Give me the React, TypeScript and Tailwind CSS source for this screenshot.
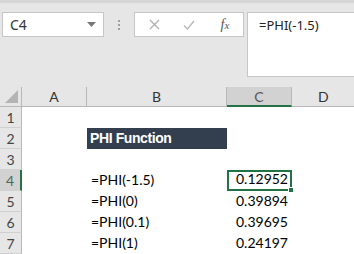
import React from "react";

const cellFont = { fontFamily: "Lato, 'Liberation Sans', sans-serif" };

export default function App() {
  const rows = [1, 2, 3, 4, 5, 6, 7];
  const data: Record<number, [string, string]> = {
    4: ["=PHI(-1.5)", "0.12952"],
    5: ["=PHI(0)", "0.39894"],
    6: ["=PHI(0.1)", "0.39695"],
    7: ["=PHI(1)", "0.24197"],
  };
  return (
    <div className="w-[354px] h-[254px] overflow-hidden bg-white" style={{ fontFamily: "'Noto Sans', sans-serif" }}>
      {/* top bar */}
      <div className="h-[87px] bg-[#e6e6e6] flex flex-col">
        <div className="h-[3px] bg-[#d5d5d5]" />
        <div className="flex items-start pt-[9px] pl-[2px]">
          <div className="w-[102px] h-[25px] bg-white border border-[#c6c6c6] flex items-center pl-[7px] pr-[7px] text-[14px] text-[#333]">
            <span className="flex-1">C4</span>
            <svg width="9" height="5" viewBox="0 0 9 5"><path d="M0 0h9L4.5 5z" fill="#777" /></svg>
          </div>
          <div className="w-[30px] h-[25px] flex flex-col items-center justify-center gap-[2px]">
            <div className="w-[2px] h-[2px] bg-[#a0a0a0]" />
            <div className="w-[2px] h-[2px] bg-[#a0a0a0]" />
            <div className="w-[2px] h-[2px] bg-[#a0a0a0]" />
          </div>
          <div className="w-[110px] h-[25px] bg-white border border-[#c6c6c6] flex items-center">
            <div className="w-[36px] flex justify-center pl-[2px]">
              <svg width="11" height="11" viewBox="0 0 11 11"><path d="M1 1l9 9M10 1l-9 9" stroke="#b0b0b0" strokeWidth="1.4" /></svg>
            </div>
            <div className="w-[36px] flex justify-center">
              <svg width="12" height="10" viewBox="0 0 12 10"><path d="M1 5.5l3.5 3.5L11 1" stroke="#b8b8b8" strokeWidth="1.4" fill="none" /></svg>
            </div>
            <div className="flex-1 flex justify-center">
              <span className="italic text-[14px] text-[#555]" style={{ fontFamily: "'Liberation Serif', serif" }}>f<span className="text-[11px]">x</span></span>
            </div>
          </div>
          <div className="ml-[3px] flex-1 h-[65px] bg-white border border-r-0 border-[#c6c6c6] pl-[11px] pt-[3px] text-[13px] text-[#222]">
            =PHI(-1.5)
          </div>
        </div>
      </div>
      {/* sheet */}
      <div className="grid grid-cols-[22px_65px_140px_65px_1fr]" style={cellFont}>
        {/* header row */}
        <div className="h-[20px] bg-[#e6e6e6] border-b border-r border-[#b8b8b8] flex items-end justify-end p-[3px]">
          <svg width="13" height="13" viewBox="0 0 13 13"><path d="M13 0V13H0z" fill="#b4b4b4" /></svg>
        </div>
        <div className="h-[20px] bg-[#e6e6e6] border-b border-r border-[#b8b8b8] flex items-center justify-center text-[14px] text-[#333]">A</div>
        <div className="h-[20px] bg-[#e6e6e6] border-b border-r border-[#b8b8b8] flex items-center justify-center text-[14px] text-[#333]">B</div>
        <div className="h-[20px] bg-[#d2d2d2] border-b-2 border-b-[#217346] border-r border-r-[#b8b8b8] flex items-center justify-center text-[14px] text-[#555]">C</div>
        <div className="h-[20px] bg-[#e6e6e6] border-b border-[#b8b8b8] flex items-center pl-[26px] text-[14px] text-[#333]">D</div>
        {rows.map((r) => (
          <React.Fragment key={r}>
            <div
              className={
                r === 4
                  ? "h-[21px] bg-[#d2d2d2] border-b border-b-[#d0d0d0] border-r-2 border-r-[#217346] flex items-center justify-center text-[14px] text-[#4a6b58]"
                  : "h-[21px] bg-[#e6e6e6] border-b border-b-[#d0d0d0] border-r border-r-[#b8b8b8] flex items-center justify-center text-[14px] text-[#444]"
              }
            >
              {r}
            </div>
            <div className="h-[21px]" />
            {r === 2 ? (
              <div className="h-[21px] bg-[#333f4f] flex items-center pl-[3px] text-[14px] font-bold tracking-[-0.4px] text-white" style={{ fontFamily: "'Liberation Sans', sans-serif" }}>PHI Function</div>
            ) : (
              <div className="h-[21px] flex items-end pl-[4px] pb-[1px] text-[14px] text-black">{data[r]?.[0] ?? ""}</div>
            )}
            {r === 4 ? (
              <div className="relative h-[21px] border-2 border-[#217346] flex items-end justify-end pr-[2px] pb-[0px] text-[14px] text-black">
                {data[r][1]}
                <div className="absolute right-[-4px] bottom-[-4px] w-[6px] h-[6px] bg-[#217346] border border-white" />
              </div>
            ) : (
              <div className="h-[21px] flex items-end justify-end pr-[4px] pb-[1px] text-[14px] text-black">{data[r]?.[1] ?? ""}</div>
            )}
            <div className="h-[21px]" />
          </React.Fragment>
        ))}
      </div>
    </div>
  );
}
